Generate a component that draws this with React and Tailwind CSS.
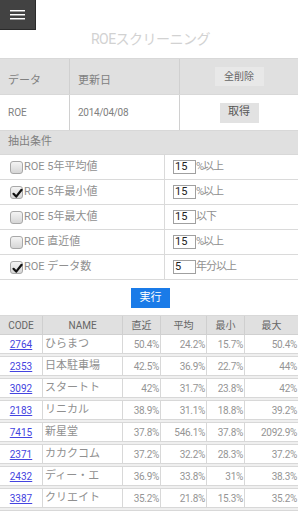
import React from "react";

const font = { fontFamily: "Roboto, 'Noto Sans CJK JP', sans-serif" };

function Checkbox({ checked }) {
  return (
    <span className="relative inline-block w-[13px] h-[13px] rounded-[3px] border border-[#a8a8a8] bg-gradient-to-b from-[#f4f4f4] to-[#d6d6d6] shrink-0">
      {checked && (
        <svg viewBox="0 0 13 13" className="absolute left-0 top-0 w-[13px] h-[13px]">
          <path d="M2.5 6.8 L5.2 9.6 L10.6 2.8" fill="none" stroke="#111" strokeWidth="2.2" strokeLinecap="round" strokeLinejoin="round" />
        </svg>
      )}
    </span>
  );
}

const conds = [
  { label: "ROE 5年平均値", checked: false, val: "15", unit: "%以上" },
  { label: "ROE 5年最小値", checked: true, val: "15", unit: "%以上" },
  { label: "ROE 5年最大値", checked: false, val: "15", unit: "以下" },
  { label: "ROE 直近値", checked: false, val: "15", unit: "%以上" },
  { label: "ROE データ数", checked: true, val: "5", unit: "年分以上" },
];

const rows = [
  ["2764", "ひらまつ", "50.4%", "24.2%", "15.7%", "50.4%"],
  ["2353", "日本駐車場", "42.5%", "36.9%", "22.7%", "44%"],
  ["3092", "スタートト", "42%", "31.7%", "23.8%", "42%"],
  ["2183", "リニカル", "38.9%", "31.1%", "18.8%", "39.2%"],
  ["7415", "新星堂", "37.8%", "546.1%", "37.8%", "2092.9%"],
  ["2371", "カカクコム", "37.2%", "32.2%", "28.3%", "37.2%"],
  ["2432", "ディー・エ", "36.9%", "33.8%", "31%", "38.3%"],
  ["3387", "クリエイト", "35.2%", "21.8%", "15.3%", "35.2%"],
];

const colW = ["w-[43px]", "w-[80px]", "w-[38px]", "w-[46px]", "w-[38px]", "w-[53px]"];

export default function App() {
  return (
    <div className="w-[301px] h-[512px] bg-white overflow-hidden text-[#808080]" style={font}>
      {/* top bar */}
      <div className="w-[36px] h-[30px] bg-[#424242] border-r border-b border-[#2a2a2a] flex flex-col items-center justify-center gap-[2px]">
        <span className="block w-[15px] h-[2px] bg-white border-b border-[#999]" />
        <span className="block w-[15px] h-[2px] bg-white border-b border-[#999]" />
        <span className="block w-[15px] h-[2px] bg-white border-b border-[#999]" />
      </div>
      <div className="h-[28px] flex items-start justify-center pt-[1px] text-[14px] leading-[16px] text-[#d2d2d2] tracking-[-0.5px]">
        ROEスクリーニング
      </div>

      {/* data table */}
      <div className="w-[298px] border-t border-[#d8d8d8]">
        <div className="flex h-[36px] bg-[#e0e0e0] border-b border-[#d8d8d8]">
          <div className="w-[70px] border-r border-[#d0d0d0] flex items-center pl-[8px] pt-[9px] text-[11px]">データ</div>
          <div className="w-[110px] border-r border-[#d0d0d0] flex items-center pl-[8px] pt-[9px] text-[11px]">更新日</div>
          <div className="flex-1 flex justify-center pt-[8px]">
            <div className="w-[49px] h-[19px] bg-[#e8e8e8] flex items-center justify-center text-[10px] text-[#666]">全削除</div>
          </div>
        </div>
        <div className="flex h-[36px] bg-white border-b border-[#d8d8d8]">
          <div className="w-[70px] border-r border-[#d0d0d0] flex items-center pl-[8px] text-[10px]">ROE</div>
          <div className="w-[110px] border-r border-[#d0d0d0] flex items-center pl-[8px] text-[10px] tracking-[-0.3px]">2014/04/08</div>
          <div className="flex-1 flex items-center justify-center">
            <div className="w-[39px] h-[20px] bg-[#e2e2e2] flex items-center justify-center text-[11px] text-[#555]">取得</div>
          </div>
        </div>
        <div className="h-[24px] bg-[#e0e0e0] border-b border-[#d8d8d8] flex items-center pl-[8px] text-[11px]">抽出条件</div>
        {conds.map((c) => (
          <div key={c.label} className="flex h-[25px] border-b border-[#dadada]">
            <div className="w-[165px] border-r border-[#dadada] flex items-center pl-[10px] gap-[1px] text-[11px] text-[#909090]">
              <Checkbox checked={c.checked} />
              <span>{c.label}</span>
            </div>
            <div className="flex-1 flex items-center pl-[8px] text-[11px] text-[#909090]">
              <span className="w-[23px] h-[14px] border border-[#a0a0a0] bg-white text-[11px] leading-[12px] text-[#222] pl-[1px]">{c.val}</span>
              <span className="tracking-[-1px]">{c.unit}</span>
            </div>
          </div>
        ))}
      </div>

      <div className="flex justify-center pt-[8px] h-[35px]">
        <div className="w-[39px] h-[20px] bg-[#1a7be8] text-white text-[11px] flex items-center justify-center">実行</div>
      </div>

      {/* result table */}
      <div className="w-[298px] border-t border-[#d8d8d8]">
        <div className="flex h-[19px] bg-[#e0e0e0] border-b border-[#d0d0d0] text-[10px] text-[#666]">
          {["CODE", "NAME", "直近", "平均", "最小", "最大"].map((h, i) => (
            <div key={h} className={`${colW[i]} ${i < 5 ? "border-r border-[#cfcfcf]" : ""} flex items-center justify-center`}>
              {h}
            </div>
          ))}
        </div>
        {rows.map((r) => (
          <div key={r[0]} className="border-b border-[#d8d8d8]">
            <div className="flex h-[19px] border-b border-[#d8d8d8] bg-white text-[10px]">
              <div className={`${colW[0]} border-r border-[#d8d8d8] flex items-center justify-center`}>
                <span className="text-[#4444e0] underline">{r[0]}</span>
              </div>
              <div className={`${colW[1]} border-r border-[#d8d8d8] flex items-center pl-[2px] text-[11px] text-[#909090]`}>{r[1]}</div>
              {r.slice(2).map((v, j) => (
                <div key={j} className={`${colW[j + 2]} ${j < 3 ? "border-r border-[#d8d8d8]" : ""} flex items-center justify-end pr-[1px] text-[#959595] tracking-[-0.3px]`}>
                  {v}
                </div>
              ))}
            </div>
            <div className="h-[2px] bg-[#efefef]" />
          </div>
        ))}
      </div>
    </div>
  );
}
